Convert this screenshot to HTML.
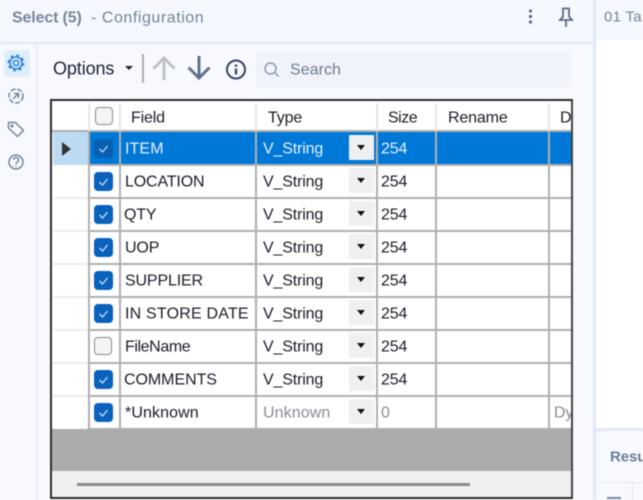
<!DOCTYPE html>
<html><head><meta charset="utf-8">
<style>
html,body{margin:0;padding:0;width:643px;height:500px;overflow:hidden;background:#f7f9fe;font-family:"Liberation Sans",sans-serif}
.a{position:absolute}
#wrap{position:relative;width:643px;height:500px;overflow:hidden;filter:blur(.45px)}
.t{position:absolute;white-space:nowrap;font-size:16px;line-height:20px;color:#1a1c28;letter-spacing:-.15px;transform:translateY(.7px)}
.cb{position:absolute;left:94px;width:19px;height:19px;border-radius:4px;background:#0b62bd}
.cb svg{position:absolute;left:4px;top:4px}
.ub{position:absolute;left:94px;width:16px;height:16px;border-radius:4px;border:1.5px solid #8a8a8a;background:#f4f4f4}
.dd{position:absolute;left:349px;width:25px;height:25px;background:#f0f0f0}
.dd i{position:absolute;left:8px;top:10px;width:0;height:0;border-left:4px solid transparent;border-right:4px solid transparent;border-top:5px solid #111}
.h{position:absolute;background:#b0b0b0;height:2px;left:88px;width:483px}
.h2{position:absolute;background:#ececec;height:2px;left:53px;width:35px}
.v{position:absolute;background:#b0b0b0;width:2px;top:132px;height:297px}
.vh{position:absolute;background:#e6e6e6;width:2px;top:103px;height:28px}
</style></head><body>
<div id="wrap">
<!-- top header -->
<div class="a" style="left:0;top:0;width:593px;height:42px;background:#f5f8fe"></div>
<div class="a" style="left:0;top:42px;width:593px;height:2px;background:#e3eaf5"></div>
<div class="t" style="left:12px;top:8px;font-size:16px;font-weight:bold;color:#6c7a90;letter-spacing:-.15px;opacity:.9">Select (5)</div>
<div class="t" style="left:91px;top:8px;font-size:16px;color:#74859c;letter-spacing:.55px">- Configuration</div>
<svg class="a" style="left:527px;top:8px" width="8" height="18"><circle cx="3.5" cy="3" r="1.6" fill="#5b6b85"/><circle cx="3.5" cy="8.5" r="1.6" fill="#5b6b85"/><circle cx="3.5" cy="14" r="1.6" fill="#5b6b85"/></svg>
<svg class="a" style="left:558px;top:7px" width="16" height="22" fill="none" stroke="#5b6b85" stroke-width="1.8"><path d="M4 1.5h8M5 1.5v8l-3 3.5h12l-3-3.5v-8M8 13v7"/></svg>
<!-- sidebar -->
<div class="a" style="left:36px;top:44px;width:2px;height:456px;background:#e8eef8"></div>
<div class="a" style="left:4px;top:50px;width:26px;height:27px;border-radius:4px;background:#dfedfc"></div>
<svg class="a" style="left:7px;top:54px" width="18" height="18" fill="none" stroke="#2f86e0"><circle cx="9" cy="9" r="6" stroke-width="1.6"/><circle cx="9" cy="9" r="7.600" stroke-width="1.800" stroke-dasharray="3 2.970"/><circle cx="9" cy="9" r="2.600" stroke-width="1.600"/></svg>
<svg class="a" style="left:7px;top:87px" width="18" height="18" fill="none" stroke="#74859c" stroke-width="1.5"><circle cx="9" cy="9" r="7" stroke-dasharray="5 1.800"/><path d="M6 12l5.500-5.500M7 6.500h4.500V11"/></svg>
<svg class="a" style="left:7px;top:120px" width="18" height="18" fill="none" stroke="#74859c" stroke-width="1.5"><path d="M1.500 2.500h7l8 8-6 6-9-8.500z" stroke-linejoin="round"/><circle cx="5" cy="6" r=".8"/></svg>
<svg class="a" style="left:7px;top:153px" width="18" height="18" fill="none" stroke="#74859c" stroke-width="1.5"><circle cx="9" cy="9" r="7"/><path d="M6.500 7a2.500 2.500 0 1 1 3.600 2.200C9.300 9.700 9 10 9 11"/><path d="M9 12.500v1.200"/></svg>
<!-- toolbar -->
<div class="a" style="left:45px;top:85px;width:172px;height:1px;background:#fff"></div>
<div class="t" style="left:53px;top:58px;font-size:18px;color:#1c2236;letter-spacing:-.1px">Options</div>
<div class="a" style="left:125px;top:66px;width:0;height:0;border-left:4px solid transparent;border-right:4px solid transparent;border-top:4px solid #222"></div>
<div class="a" style="left:142px;top:54px;width:2px;height:29px;background:#a9aeb6"></div>
<svg class="a" style="left:151px;top:55px" width="26" height="26" fill="none" stroke="#bcc1c8" stroke-width="3"><path d="M13 25V3M2.500 13.500L13 3l10.500 10.500"/></svg>
<svg class="a" style="left:186px;top:55px" width="26" height="26" fill="none" stroke="#5d7191" stroke-width="3"><path d="M13 1v22M2.500 12.500L13 23l10.500-10.500"/></svg>
<svg class="a" style="left:225px;top:59px" width="22" height="22" fill="none" stroke="#354766" stroke-width="2"><circle cx="11" cy="10.500" r="9"/><path d="M11 9.500v6" stroke-width="2.400"/><path d="M11 5.500v2.200" stroke-width="2.400"/></svg>
<div class="a" style="left:256px;top:50px;width:315px;height:38px;border-radius:4px;background:#f0f3fa"></div>
<svg class="a" style="left:263px;top:61px" width="17" height="17" fill="none" stroke="#8b9ab0" stroke-width="1.500"><circle cx="7.500" cy="7.500" r="5.500"/><path d="M11.500 11.500l4 4"/></svg>
<div class="t" style="left:290px;top:60px;font-size:16px;color:#6d7c90;letter-spacing:.05px">Search</div>
<!-- grid -->
<div class="a" style="left:50px;top:99px;width:523px;height:400px;box-sizing:border-box;border:2px solid #2b2b2b;border-right-color:#444;background:#fff"></div>
<div class="a" style="left:53px;top:132px;width:35px;height:33px;background:#bcdaf2"></div>
<div class="a" style="left:88px;top:132px;width:483px;height:33px;background:#0078d7"></div>
<div class="a" style="left:52px;top:429px;width:519px;height:42px;background:#ababab"></div>
<div class="a" style="left:52px;top:471px;width:519px;height:26px;background:#f0f0f0"></div>
<div class="a" style="left:77px;top:483px;width:393px;height:3px;background:#8a8a8a"></div>
<div class="a" style="left:52px;top:130px;width:519px;height:2px;background:#b0b0b0"></div>
<div class="vh" style="left:88px"></div><div class="vh" style="left:119px"></div><div class="vh" style="left:255px"></div><div class="vh" style="left:376px"></div><div class="vh" style="left:435px"></div><div class="vh" style="left:548px"></div>
<div class="v" style="left:88px"></div><div class="v" style="left:119px"></div><div class="v" style="left:255px"></div><div class="v" style="left:376px"></div><div class="v" style="left:435px"></div><div class="v" style="left:548px"></div>
<div class="h" style="top:164px"></div><div class="h" style="top:197px"></div><div class="h" style="top:230px"></div><div class="h" style="top:263px"></div><div class="h" style="top:296px"></div><div class="h" style="top:329px"></div><div class="h" style="top:362px"></div><div class="h" style="top:395px"></div><div class="h" style="top:428px"></div>
<div class="h2" style="top:197px"></div><div class="h2" style="top:230px"></div><div class="h2" style="top:263px"></div><div class="h2" style="top:296px"></div><div class="h2" style="top:329px"></div><div class="h2" style="top:362px"></div><div class="h2" style="top:395px"></div>
<!-- header row -->
<div class="ub" style="left:95px;top:107px"></div>
<div class="t" style="left:131px;top:108px">Field</div>
<div class="t" style="left:268px;top:108px">Type</div>
<div class="t" style="left:388px;top:108px;letter-spacing:-.5px">Size</div>
<div class="t" style="left:448px;top:108px">Rename</div>
<div class="t" style="left:560px;top:108px;width:11px;overflow:hidden">D</div>
<!-- row indicator -->
<div class="a" style="left:62px;top:142px;width:0;height:0;border-top:7px solid transparent;border-bottom:7px solid transparent;border-left:9px solid #333"></div>
<!-- checkboxes -->
<div class="cb" style="background:#0a5fb3;top:139px"><svg width="11" height="11" fill="none" stroke="#b9d6f2" stroke-width="1.300"><path d="M1.500 6l3 3 5-6"/></svg></div>
<div class="cb" style="top:172px"><svg width="11" height="11" fill="none" stroke="#c5dcf3" stroke-width="1.300"><path d="M1.500 6l3 3 5-6"/></svg></div>
<div class="cb" style="top:205px"><svg width="11" height="11" fill="none" stroke="#c5dcf3" stroke-width="1.300"><path d="M1.500 6l3 3 5-6"/></svg></div>
<div class="cb" style="top:238px"><svg width="11" height="11" fill="none" stroke="#c5dcf3" stroke-width="1.300"><path d="M1.500 6l3 3 5-6"/></svg></div>
<div class="cb" style="top:271px"><svg width="11" height="11" fill="none" stroke="#c5dcf3" stroke-width="1.300"><path d="M1.500 6l3 3 5-6"/></svg></div>
<div class="cb" style="top:304px"><svg width="11" height="11" fill="none" stroke="#c5dcf3" stroke-width="1.300"><path d="M1.500 6l3 3 5-6"/></svg></div>
<div class="ub" style="top:337px"></div>
<div class="cb" style="top:370px"><svg width="11" height="11" fill="none" stroke="#c5dcf3" stroke-width="1.300"><path d="M1.500 6l3 3 5-6"/></svg></div>
<div class="cb" style="top:403px"><svg width="11" height="11" fill="none" stroke="#c5dcf3" stroke-width="1.300"><path d="M1.500 6l3 3 5-6"/></svg></div>
<!-- field names -->
<div class="t" style="left:125px;top:139px;color:#e6f1fb;letter-spacing:.1px">ITEM</div>
<div class="t" style="left:125px;top:172px">LOCATION</div>
<div class="t" style="left:124px;top:205px">QTY</div>
<div class="t" style="left:125px;top:238px">UOP</div>
<div class="t" style="left:125px;top:271px">SUPPLIER</div>
<div class="t" style="left:125px;top:304px;letter-spacing:.2px">IN STORE DATE</div>
<div class="t" style="left:125px;top:337px;letter-spacing:-.4px">FileName</div>
<div class="t" style="left:124px;top:370px;letter-spacing:-.05px">COMMENTS</div>
<div class="t" style="left:125px;top:403px;letter-spacing:.1px">*Unknown</div>
<!-- types -->
<div class="t" style="left:263px;top:139px;color:#e6f1fb">V_String</div>
<div class="t" style="left:263px;top:172px">V_String</div>
<div class="t" style="left:263px;top:205px">V_String</div>
<div class="t" style="left:263px;top:238px">V_String</div>
<div class="t" style="left:263px;top:271px">V_String</div>
<div class="t" style="left:263px;top:304px">V_String</div>
<div class="t" style="left:263px;top:337px">V_String</div>
<div class="t" style="left:263px;top:370px">V_String</div>
<div class="t" style="left:263px;top:403px;color:#8b8b94;letter-spacing:.1px">Unknown</div>
<!-- dropdowns -->
<div class="dd" style="top:135px"><i></i></div><div class="dd" style="top:168px"><i></i></div><div class="dd" style="top:201px"><i></i></div><div class="dd" style="top:234px"><i></i></div><div class="dd" style="top:267px"><i></i></div><div class="dd" style="top:300px"><i></i></div><div class="dd" style="top:333px"><i></i></div><div class="dd" style="top:366px"><i></i></div><div class="dd" style="top:399px"><i></i></div>
<!-- sizes -->
<div class="t" style="left:381px;top:139px;color:#e6f1fb">254</div>
<div class="t" style="left:381px;top:172px">254</div>
<div class="t" style="left:381px;top:205px">254</div>
<div class="t" style="left:381px;top:238px">254</div>
<div class="t" style="left:381px;top:271px">254</div>
<div class="t" style="left:381px;top:304px">254</div>
<div class="t" style="left:381px;top:337px">254</div>
<div class="t" style="left:381px;top:370px">254</div>
<div class="t" style="left:381px;top:403px;color:#8b8b94">0</div>
<div class="t" style="left:554px;top:403px;width:17px;overflow:hidden;color:#8b8b94">Dy</div>
<!-- right panel -->
<div class="a" style="left:593px;top:0;width:3px;height:500px;background:#e3eaf6"></div>
<div class="a" style="left:596px;top:0;width:47px;height:40px;background:#f5f8fe"></div>
<div class="a" style="left:596px;top:40px;width:47px;height:388px;background:#fff"></div>
<div class="a" style="left:596px;top:428px;width:47px;height:3px;background:#e3eaf6"></div>
<div class="a" style="left:596px;top:431px;width:47px;height:69px;background:#f7f9fe"></div>
<div class="a" style="left:597px;top:482px;width:46px;height:1px;background:#e0e7f2"></div>
<div class="a" style="left:632px;top:483px;width:1px;height:17px;background:#e0e7f2"></div>
<div class="a" style="left:607px;top:497px;width:14px;height:2px;background:#74859c"></div>
<div class="t" style="left:604px;top:7px;font-size:15px;color:#74859c;letter-spacing:.3px">01 Ta</div>
<div class="t" style="left:610px;top:447px;font-size:15px;font-weight:bold;color:#6c7d96;letter-spacing:-.1px">Resu</div>
</div>
</body></html>
